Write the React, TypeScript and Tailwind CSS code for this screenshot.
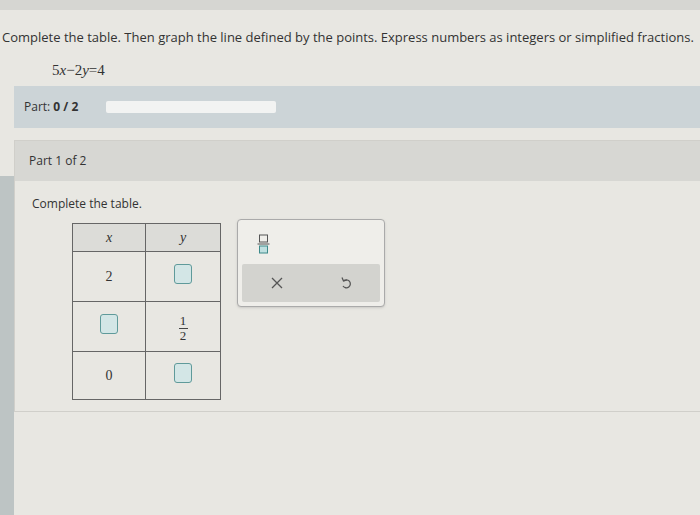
import React from 'react';

const FracIcon = () => (
  <svg width="13" height="20" viewBox="0 0 13 20">
    <rect x="2.5" y="1" width="8" height="7" fill="none" stroke="#555" strokeWidth="1" />
    <line x1="0.5" y1="10" x2="12.5" y2="10" stroke="#555" strokeWidth="1" />
    <rect x="2.5" y="12" width="8" height="7" fill="#bfe0e0" stroke="#3d8a8a" strokeWidth="1" />
  </svg>
);

const Box = () => (
  <span className="inline-block w-[18px] h-[20px] rounded-[3px] border border-[#5f9a9a] bg-[#d3e6e6]" />
);

const App: React.FC = () => {
  return (
    <div className="w-[700px] h-[515px] overflow-hidden bg-[#e8e7e2] flex flex-col font-['Open_Sans',sans-serif] text-[#333]">
      <div className="h-[10px] bg-[#d6d6d2] shrink-0" />
      <div className="pt-[18px] pl-[2px] text-[13px] leading-[18px] whitespace-nowrap">
        Complete the table. Then graph the line defined by the points. Express numbers as integers or simplified fractions.
      </div>
      <div className="pl-[52px] pt-[13px] text-[15px] font-['Liberation_Serif',serif] h-[30px]">
        5<i>x</i>−2<i>y</i>=4
      </div>
      <div className="flex flex-1">
        <div className="w-[14px] bg-[#bdc4c4] mt-[100px] shrink-0" />
        <div className="flex-1 flex flex-col">
          <div className="mt-[10px] h-[42px] bg-[#ccd4d7] flex items-center pl-[10px] gap-[28px] text-[12px]">
            <span>
              Part: <b>0 / 2</b>
            </span>
            <span className="w-[170px] h-[12px] bg-[#f2f3f2] rounded-[2px]" />
          </div>
          <div className="mt-[12px] border border-[#d0cfca] mr-[-2px] flex flex-col h-[272px]">
            <div className="h-[40px] bg-[#d7d7d3] flex items-center pl-[14px] text-[12px]">Part 1 of 2</div>
            <div className="pl-[17px] pt-[14px] text-[12px]">Complete the table.</div>
            <div className="flex items-start pl-[57px] pt-[10px] gap-[16px]">
              <table className="border-collapse border border-[#666] text-[14px] font-['Liberation_Serif',serif]">
                <tbody>
                  <tr className="h-[28px] bg-[#dcdcd8]">
                    <td className="w-[73px] border border-[#666] text-center italic">x</td>
                    <td className="w-[75px] border border-[#666] text-center italic">y</td>
                  </tr>
                  <tr className="h-[50px]">
                    <td className="border border-[#666] text-center">2</td>
                    <td className="border border-[#666] text-center"><Box /></td>
                  </tr>
                  <tr className="h-[50px]">
                    <td className="border border-[#666] text-center"><Box /></td>
                    <td className="border border-[#666] text-center">
                      <span className="inline-flex flex-col items-center leading-[14px] text-[13px]">
                        <span>1</span>
                        <span className="w-[9px] border-t border-[#444]" />
                        <span>2</span>
                      </span>
                    </td>
                  </tr>
                  <tr className="h-[48px]">
                    <td className="border border-[#666] text-center">0</td>
                    <td className="border border-[#666] text-center"><Box /></td>
                  </tr>
                </tbody>
              </table>
              <div className="mt-[-4px] w-[148px] h-[88px] rounded-[4px] border border-[#aaa] bg-[#efeeea] flex flex-col p-[4px] shadow-sm">
                <div className="h-[40px] flex items-center pl-[15px]">
                  <FracIcon />
                </div>
                <div className="flex-1 bg-[#d3d3cf] rounded-[2px] flex items-center justify-around text-[#444]">
                  <svg width="12" height="12" viewBox="0 0 12 12">
                    <path d="M1 1 L11 11 M11 1 L1 11" stroke="#555" strokeWidth="1.3" />
                  </svg>
                  <svg width="12" height="14" viewBox="0 0 12 14">
                    <path d="M3.5 5 A4 4 0 1 1 3 10" fill="none" stroke="#555" strokeWidth="1.3" />
                    <path d="M2 1.5 L3.5 5 L7 4" fill="none" stroke="#555" strokeWidth="1.3" />
                  </svg>
                </div>
              </div>
            </div>
          </div>
        </div>
      </div>
    </div>
  );
};

export default App;
